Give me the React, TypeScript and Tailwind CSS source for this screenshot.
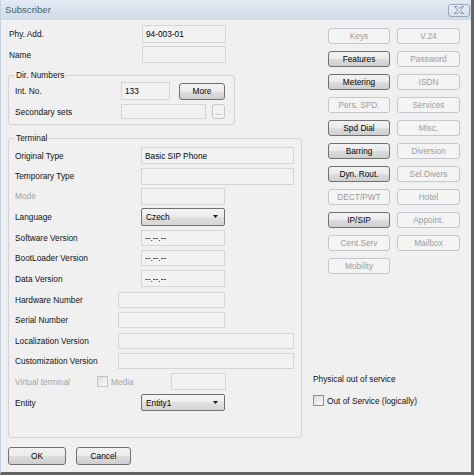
import React from "react";

type FieldProps = { className: string; value?: string };

function Field({ className, value }: FieldProps) {
    return (
        <div className={`flex shrink-0 items-center border border-[#d5d5d5] bg-[#f2f2f2] px-[3px] text-black ${className}`}>
            {value}
        </div>
    );
}

function Combo({ className, value }: FieldProps) {
    return (
        <div
            className={`flex shrink-0 items-center justify-between rounded-[2px] border border-[#707070] bg-[linear-gradient(#f4f4f4_0%,#ececec_50%,#e0e0e0_50%,#d6d6d6_100%)] pl-[4px] pr-[6px] text-black ${className}`}
        >
            <span>{value}</span>
            <svg width="5" height="3" viewBox="0 0 5 3">
                <path d="M0 0h5L2.5 3z" fill="#1a1a1a" />
            </svg>
        </div>
    );
}

function Btn({ label, on, className }: { label: string; on?: boolean; className: string }) {
    return (
        <div
            className={`flex shrink-0 items-center justify-center rounded-[3px] border ${
                on
                    ? "border-[#707070] bg-[linear-gradient(#f2f2f2_0%,#ebebeb_50%,#dddddd_50%,#cfcfcf_100%)] text-black"
                    : "border-[#c3c6ca] bg-[#f4f4f4] text-[#9c9c9c]"
            } ${className}`}
        >
            {label}
        </div>
    );
}

function Check({ dim }: { dim?: boolean }) {
    return (
        <span
            className={`block h-[11px] w-[11px] shrink-0 border bg-[linear-gradient(135deg,#dcdcdc,#fbfbfb)] ${
                dim ? "border-[#c4c4c4]" : "border-[#8e8f8f]"
            }`}
        />
    );
}

const sideButtons: [string, boolean][] = [
    ["Keys", false],
    ["V.24", false],
    ["Features", true],
    ["Password", false],
    ["Metering", true],
    ["ISDN", false],
    ["Pers. SPD.", false],
    ["Services", false],
    ["Spd Dial", true],
    ["Misc.", false],
    ["Barring", true],
    ["Diversion", false],
    ["Dyn. Rout.", true],
    ["Sel.Divers", false],
    ["DECT/PWT", false],
    ["Hotel", false],
    ["IP/SIP", true],
    ["Appoint.", false],
    ["Cent.Serv", false],
    ["Mailbox", false],
    ["Mobility", false],
];

export default function App() {
    const terminalRows: { label: string; h: string; lw: string; dim?: boolean; control: React.ReactNode }[] = [
        { label: "Original Type", h: "h-[21px]", lw: "w-[126px]", control: <Field className="h-[17px] w-[153px]" value="Basic SIP Phone" /> },
        { label: "Temporary Type", h: "h-[20px]", lw: "w-[126px]", control: <Field className="h-[17px] w-[153px]" /> },
        { label: "Mode", h: "h-[20px]", lw: "w-[126px]", dim: true, control: <Field className="h-[17px] w-[84px]" /> },
        { label: "Language", h: "h-[21px]", lw: "w-[126px]", control: <Combo className="h-[18px] w-[84px]" value="Czech" /> },
        { label: "Software Version", h: "h-[21px]", lw: "w-[126px]", control: <Field className="h-[16px] w-[84px] text-[#555]" value="--.--.--" /> },
        { label: "BootLoader Version", h: "h-[20px]", lw: "w-[126px]", control: <Field className="h-[16px] w-[84px] text-[#555]" value="--.--.--" /> },
        { label: "Data Version", h: "h-[21px]", lw: "w-[126px]", control: <Field className="h-[17px] w-[84px] text-[#555]" value="--.--.--" /> },
        { label: "Hardware Number", h: "h-[21px]", lw: "w-[103px]", control: <Field className="h-[16px] w-[107px]" /> },
        { label: "Serial Number", h: "h-[20px]", lw: "w-[103px]", control: <Field className="h-[16px] w-[107px]" /> },
        { label: "Localization Version", h: "h-[21px]", lw: "w-[103px]", control: <Field className="h-[16px] w-[176px]" /> },
        { label: "Customization Version", h: "h-[20px]", lw: "w-[103px]", control: <Field className="h-[16px] w-[176px]" /> },
    ];

    return (
        <div className="flex h-[475px] w-[474px] flex-col border-b-[3px] border-l border-r-[3px] border-b-[#626262] border-l-[#c2d2e3] border-r-[#626262] bg-[#f0f0f0] font-['Liberation_Sans',Arial,sans-serif] text-[8.3px] leading-[10px] text-[#111]">
            {/* title bar */}
            <div className="flex h-[20px] shrink-0 items-center justify-between bg-[linear-gradient(#e2eaf3,#cfdbe8)] pl-[4px] pr-[1px]">
                <span className="text-[9.6px] text-[#4b5d71]">Subscriber</span>
                <div className="flex h-[13px] w-[22px] items-center justify-center rounded-[3px] border border-[#97a5b6] bg-[linear-gradient(#e6edf5,#d5dfea)]">
                    <svg width="10" height="8" viewBox="0 0 10 8">
                        <path
                            d="M0.5 0.5h2.5l2 2 2-2h2.5l-3.2 3.5 3.2 3.5h-2.5l-2-2-2 2h-2.5l3.2-3.5z"
                            fill="#eef2f7"
                            stroke="#7b8898"
                            strokeWidth="0.9"
                            strokeLinejoin="round"
                        />
                    </svg>
                </div>
            </div>

            <div className="flex flex-1">
                {/* left column */}
                <div className="flex w-[302px] shrink-0 flex-col pl-[7px]">
                    <div className="mt-[5px] flex h-[18px] items-center">
                        <span className="w-[134px] pl-[1px]">Phy. Add.</span>
                        <Field className="h-[18px] w-[84px]" value="94-003-01" />
                    </div>
                    <div className="mt-[3px] flex h-[17px] items-center">
                        <span className="w-[134px] pl-[1px]">Name</span>
                        <Field className="h-[17px] w-[84px]" />
                    </div>

                    <fieldset className="mt-[7px] w-[227px] rounded-[3px] border border-[#d3d3d3] pb-[5px]">
                        <legend className="ml-[6px] px-[1px] leading-[10px]">Dir. Numbers</legend>
                        <div className="mt-[2px] flex h-[18px] items-center pl-[6px]">
                            <span className="w-[106px]">Int. No.</span>
                            <Field className="h-[18px] w-[49px]" value="133" />
                            <Btn on label="More" className="ml-[9px] h-[17px] w-[46px]" />
                        </div>
                        <div className="mt-[4px] flex h-[15px] items-center pl-[6px]">
                            <span className="w-[106px]">Secondary sets</span>
                            <Field className="h-[15px] w-[85px]" />
                            <Btn label="..." className="ml-[6px] h-[15px] w-[13px] rounded-[2px]" />
                        </div>
                    </fieldset>

                    <fieldset className="mt-[8px] w-[294px] rounded-[3px] border border-[#d3d3d3] pb-[24px]">
                        <legend className="ml-[6px] px-[1px] leading-[10px]">Terminal</legend>
                        <div className="mt-[2px] flex flex-col">
                            {terminalRows.map((r) => (
                                <div key={r.label} className={`flex items-center pl-[6px] ${r.h}`}>
                                    <span className={`shrink-0 ${r.lw} ${r.dim ? "text-[#a3a3a3]" : ""}`}>{r.label}</span>
                                    {r.control}
                                </div>
                            ))}
                            <div className="flex h-[21px] items-center pl-[6px]">
                                <span className="w-[82px] shrink-0 text-[#a3a3a3]">Virtual terminal</span>
                                <Check dim />
                                <span className="ml-[3px] w-[60px] shrink-0 text-[#a3a3a3]">Media</span>
                                <Field className="h-[17px] w-[55px]" />
                            </div>
                            <div className="flex h-[21px] items-center pl-[6px]">
                                <span className="w-[126px] shrink-0">Entity</span>
                                <Combo className="h-[17px] w-[84px]" value="Entity1" />
                            </div>
                        </div>
                    </fieldset>

                    <div className="mt-[9px] flex gap-[10px]">
                        <Btn on label="OK" className="h-[18px] w-[58px]" />
                        <Btn on label="Cancel" className="h-[18px] w-[55px]" />
                    </div>
                </div>

                {/* right column */}
                <div className="flex flex-1 flex-col pl-[10px]">
                    <div className="ml-[15px] mt-[8px] grid grid-cols-[62px_63px] gap-x-[7px] gap-y-[7px]">
                        {sideButtons.map(([label, on]) => (
                            <Btn key={label} label={label} on={on} className="h-[16px]" />
                        ))}
                    </div>
                    <span className="mt-[100px]">Physical out of service</span>
                    <div className="mt-[11px] flex items-center gap-[3px]">
                        <Check />
                        <span>Out of Service (logically)</span>
                    </div>
                </div>
            </div>
        </div>
    );
}
